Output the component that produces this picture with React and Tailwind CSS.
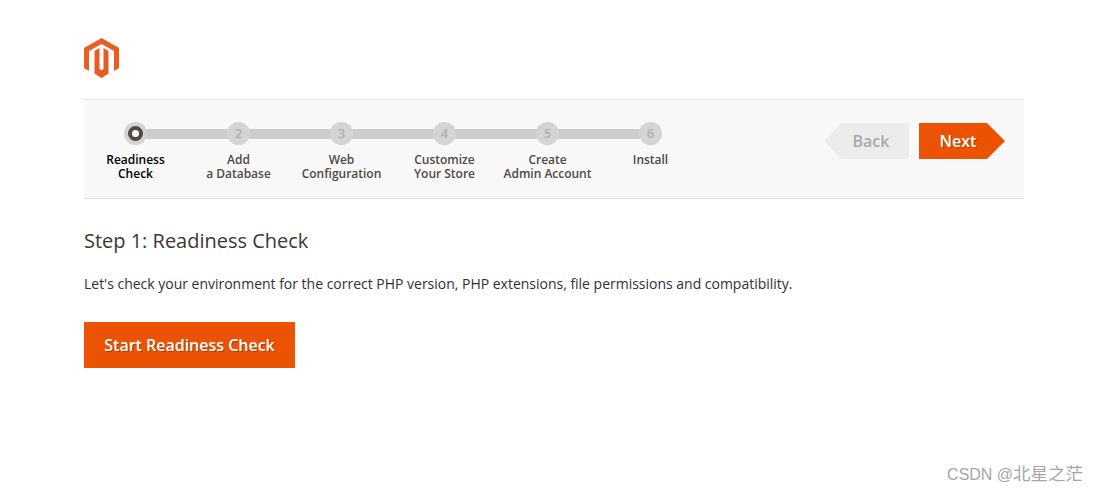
const font = { fontFamily: '"Open Sans", sans-serif' };

const steps = [
  ["Readiness", "Check"],
  ["Add", "a Database"],
  ["Web", "Configuration"],
  ["Customize", "Your Store"],
  ["Create", "Admin Account"],
  ["Install"],
];

function Logo() {
  return (
    <svg width="35" height="40" viewBox="0 0 35 40" className="block">
      <path
        fill="#ea5d22"
        d="M17.5 0L35 10V30L30 33V13L17.5 6L5 13V33L0 30V10ZM15.5 10V31L17.5 32.2L19.5 31V10L24.5 13V35.5L17.5 40L10.5 35.5V13Z"
      />
    </svg>
  );
}

function Step({ n }) {
  if (n === 1) {
    return (
      <div className="relative z-10 w-[23px] h-[23px] rounded-full bg-[#d4d4d4] flex items-center justify-center shrink-0">
        <div className="w-[15px] h-[15px] rounded-full bg-white border-[4.5px] border-[#514943]" />
      </div>
    );
  }
  return (
    <div className="relative z-10 w-[23px] h-[23px] rounded-full bg-[#d4d4d4] flex items-center justify-center shrink-0 text-[13px] font-semibold text-[#b0b0b0]">
      {n}
    </div>
  );
}

export default function App() {
  return (
    <div className="relative w-[1098px] h-[493px] bg-white overflow-hidden tracking-[-0.012px]" style={font}>
      <div className="pl-[84px] pr-[74px] pt-[38px]">
        <Logo />
        <div className="mt-[21px] h-[100px] bg-[#f8f8f8] border-y border-[#e3e3e3] flex justify-between">
          <div className="pt-[22px]">
            <div className="flex items-center pl-[40px]">
              {[1, 2, 3, 4, 5, 6].map((n) => (
                <div key={n} className="flex items-center">
                  <Step n={n} />
                  {n < 6 && <div className="w-[86px] -mx-[3px] h-[10px] bg-[#cdcdcd]" />}
                </div>
              ))}
            </div>
            <div className="flex mt-[8px]">
              {steps.map((s, i) => (
                <div
                  key={i}
                  className={`w-[103px] text-center text-[12px] leading-[14px] font-semibold ${i === 0 ? "text-black" : "text-[#514943]"}`}
                >
                  {s.map((l) => (
                    <div key={l} className="whitespace-nowrap">{l}</div>
                  ))}
                </div>
              ))}
            </div>
          </div>
          <div className="flex gap-[10px] pt-[23px] pr-[19px]">
            <div className="w-[85px] h-[36px] bg-[#ececec] [clip-path:polygon(17px_0,100%_0,100%_100%,17px_100%,0_50%)] flex items-center justify-center pl-[9px] text-[16px] font-semibold text-[#a8a8a8]">
              Back
            </div>
            <div className="w-[86px] h-[36px] bg-[#eb5202] [clip-path:polygon(0_0,68px_0,100%_50%,68px_100%,0_100%)] flex items-center justify-center pr-[8px] text-[16px] font-semibold text-white [text-shadow:1px_1px_0_rgba(0,0,0,0.25)]">
              Next
            </div>
          </div>
        </div>
        <h1 className="mt-[28px] text-[20px] leading-[27px] font-normal text-[#41362f]">
          Step 1: Readiness Check
        </h1>
        <p className="mt-[20px] text-[14px] leading-[19px] text-[#303030]">
          Let's check your environment for the correct PHP version, PHP extensions, file permissions and compatibility.
        </p>
        <button className="block mt-[29px] w-[211px] h-[46px] bg-[#eb5202] text-[16px] font-semibold text-white [text-shadow:1px_1px_0_rgba(0,0,0,0.25)]">
          Start Readiness Check
        </button>
      </div>
      <div
        className="absolute right-[15px] top-[464px] text-[16px] leading-[20px] text-[#a6a6a6] whitespace-nowrap"
        style={{ fontFamily: '"Liberation Sans", "Noto Sans CJK SC", sans-serif' }}
      >
        CSDN @<span className="text-[17.5px]">北星之茫</span>
      </div>
    </div>
  );
}
